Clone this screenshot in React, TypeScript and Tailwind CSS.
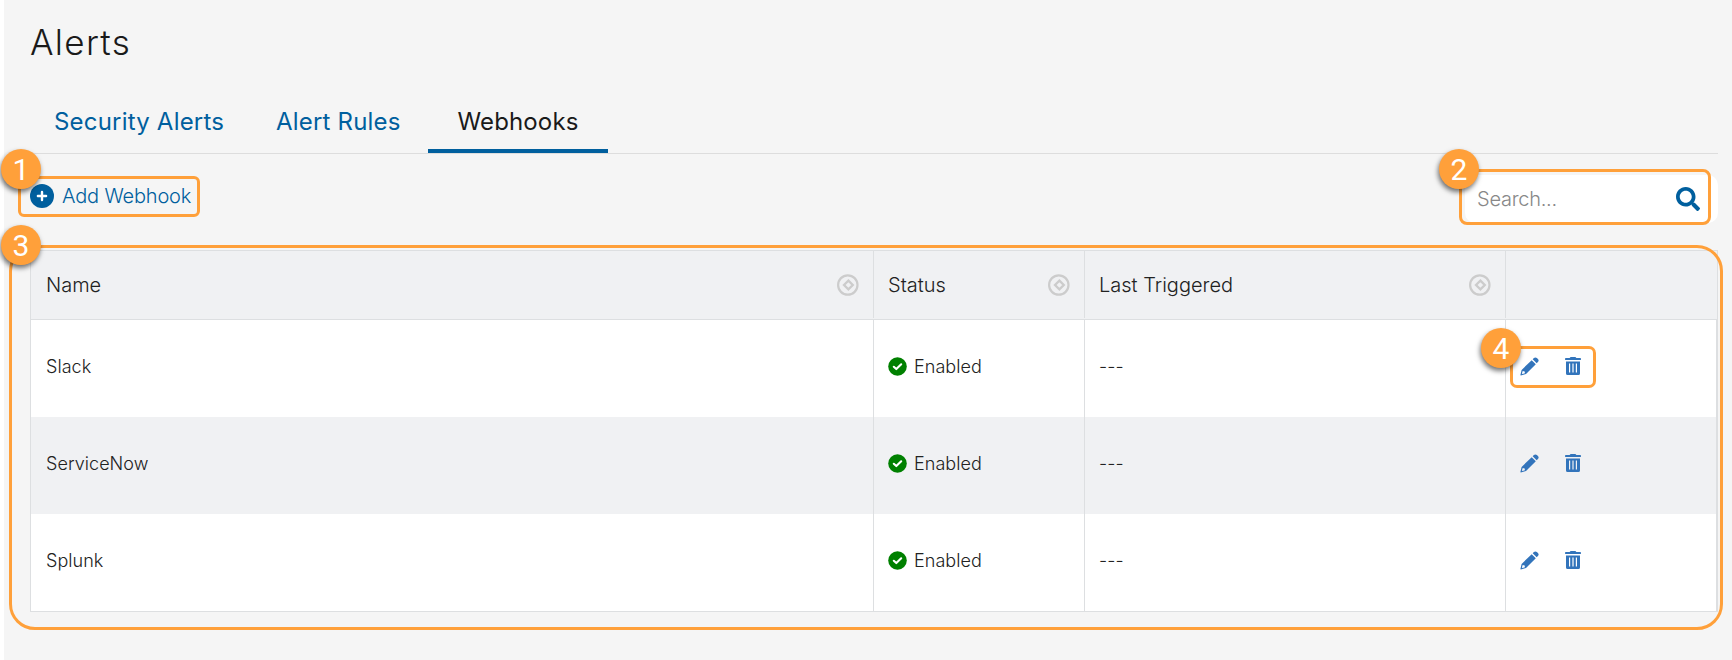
import React from "react";
import { FaSearch } from "react-icons/fa";

function PlusCircle() {
  return (
    <svg className="h-6 w-6" viewBox="0 0 24 24">
      <circle cx="12" cy="12" r="12" fill="#005f9e" />
      <path d="M12 7.9 V16.1 M7.9 12 H16.1" stroke="#fff" strokeWidth="2.4" strokeLinecap="round" />
    </svg>
  );
}

function CheckCircle() {
  return (
    <svg className="h-[19px] w-[19px]" viewBox="0 0 19 19">
      <circle cx="9.5" cy="9.5" r="9.3" fill="#008000" />
      <path
        d="M5.8 9.8 L8.3 12.1 L13.2 7.3"
        fill="none"
        stroke="#fff"
        strokeWidth="2.1"
        strokeLinecap="round"
        strokeLinejoin="round"
      />
    </svg>
  );
}

function SortIcon() {
  return (
    <svg className="h-[22px] w-[22px] shrink-0" viewBox="0 0 22 22" fill="none" stroke="#cccccc">
      <circle cx="10.8" cy="11" r="9.7" strokeWidth="2.2" />
      <path d="M11.4 6.6 L15.8 11 L11.4 15.4 L7 11 Z" strokeWidth="2.3" />
    </svg>
  );
}

function PencilIcon() {
  return (
    <svg className="h-[19px] w-[19px]" viewBox="0 0 19 19" fill="#3274bb">
      <path d="M12.7 2.3 l1.2 -1.2 a2.2 2.2 0 0 1 3 0 l1 1 a2.2 2.2 0 0 1 0 3 l-1.2 1.2 z" />
      <path
        fillRule="evenodd"
        d="M11.7 3.2 L15.8 7.3 L6 17.1 L0.8 18.4 A0.5 0.5 0 0 1 0.4 18 L1.6 12.9 Z M2.7 14 L1.9 16.5 L2.5 17.1 L4.9 16.3 L4.7 14.4 Z"
      />
    </svg>
  );
}

function TrashIcon() {
  return (
    <svg className="h-[18px] w-4" viewBox="0 0 16 18" fill="#3274bb">
      <path d="M0.6 1 H4.6 L5.6 0 H10.4 L11.4 1 H15.4 A0.5 0.5 0 0 1 15.9 1.5 V3 H0.1 V1.5 A0.5 0.5 0 0 1 0.6 1 Z" />
      <path
        fillRule="evenodd"
        d="M1 4.4 H15 V16.4 A1.6 1.6 0 0 1 13.4 18 H2.6 A1.6 1.6 0 0 1 1 16.4 Z M4 6.6 V15.6 H5.2 V6.6 Z M7.4 6.6 V15.6 H8.6 V6.6 Z M10.8 6.6 V15.6 H12 V6.6 Z"
      />
    </svg>
  );
}

function Badge({ n, className }: { n: number; className: string }) {
  return (
    <div
      className={`absolute flex h-10 w-10 items-center justify-center rounded-full bg-[#ffa03a] font-['Roboto',sans-serif] text-[30px] leading-none text-white shadow-[-1px_3px_5px_rgba(0,0,0,0.55)] ${className}`}
    >
      <span className="mt-0.5">{n}</span>
    </div>
  );
}

const columns = ["Name", "Status", "Last Triggered"];
const hooks = ["Slack", "ServiceNow", "Splunk"];
const grid = "grid grid-cols-[843px_211px_421px_1fr]";

export default function App() {
  return (
    <div className="relative h-[660px] w-[1732px] overflow-hidden bg-white pl-1 font-['Inter',sans-serif] text-[#222222]">
      <div className="flex h-full flex-col bg-[#f5f5f5] pr-3.5 pl-[26px]">
        <h1 className="mt-5 h-11 text-[35px] leading-[44px] font-light tracking-[1.3px] text-[#1a1a1a]">
          Alerts
        </h1>
        <nav className="mt-[30px] flex h-15 border-b border-[#dddddd] text-2xl font-normal tracking-[0.2px] text-[#005f9e]">
          <a className="w-[222px] pt-[13px] pl-6 leading-[30px]">Security Alerts</a>
          <a className="w-[176px] pt-[13px] pl-6 leading-[30px]">Alert Rules</a>
          <a className="w-[180px] border-b-4 border-[#005f9e] pt-[13px] text-center leading-[30px] tracking-[0.15px] text-[#1a1a1a]">
            Webhooks
          </a>
        </nav>
        <div className="flex h-24 items-start justify-between">
          <button className="mt-[30px] flex items-center gap-2 text-xl leading-6 font-light tracking-[-0.17px] text-[#005f9e]">
            <PlusCircle />
            Add Webhook
          </button>
          <div className="mt-[21px] flex h-12 w-[253px] items-center justify-between rounded-[10px] bg-white pr-[18px] pl-3 text-xl font-light tracking-[-0.25px] text-[#888888]">
            <span>Search...</span>
            <FaSearch className="h-6 w-6 text-[#005f9e]" />
          </div>
        </div>
        <div className="h-[362px] border border-[#dddfe1] bg-white">
          <div className={`${grid} h-[69px] border-b border-[#dddfe1] bg-[#f0f1f3] pb-px text-xl font-light`}>
            {columns.map((c) => (
              <div
                key={c}
                className="flex items-center justify-between border-r border-[#dddfe1] pr-3.5 pl-3.5 first:pl-[15px]"
              >
                {c}
                <SortIcon />
              </div>
            ))}
            <div />
          </div>
          {hooks.map((name) => (
            <div
              key={name}
              className={`${grid} h-[97px] border-r border-[#dddfe1] text-lg font-light tracking-[0.05px] even:bg-white odd:bg-[#f0f1f3]`}
            >
              <div className="flex items-center border-r border-[#dddfe1] pb-1 pl-[15px]">{name}</div>
              <div className="flex items-center gap-[7px] border-r border-[#dddfe1] pb-1 pl-3.5">
                <CheckCircle />
                Enabled
              </div>
              <div className="flex items-center border-r border-[#dddfe1] pb-1 pl-3.5">---</div>
              <div className="flex items-center gap-[26px] pb-[5px] pl-3.5">
                <PencilIcon />
                <TrashIcon />
              </div>
            </div>
          ))}
        </div>
      </div>

      <div className="absolute top-[176px] left-[18px] h-[41px] w-[182px] rounded-[6px] border-3 border-[#ffa03a]" />
      <div className="absolute top-[169px] left-[1459px] h-14 w-[252px] rounded-[8px] border-3 border-[#ffa03a]" />
      <div className="absolute top-[245px] left-[9px] h-[385px] w-[1714px] rounded-[26px] border-3 border-[#ffa03a]" />
      <div className="absolute top-[346px] left-[1510px] h-[42px] w-[86px] rounded-[7px] border-3 border-[#ffa03a]" />
      <Badge n={1} className="top-[149px] left-px" />
      <Badge n={2} className="top-[149px] left-[1439px]" />
      <Badge n={3} className="top-[225px] left-px" />
      <Badge n={4} className="top-[328px] left-[1481px]" />
    </div>
  );
}
